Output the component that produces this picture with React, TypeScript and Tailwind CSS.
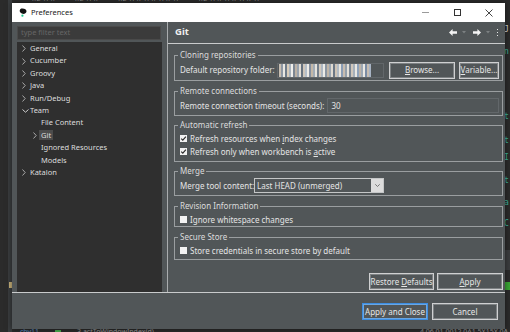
import React from "react";

const stripes = [
  "#c9bfb2", "#8e98a4", "#e9e7e1", "#6f7c8a", "#d8cbb8", "#a9b3bd", "#f0efeb", "#7d8793",
  "#bcb2a5", "#98a3af", "#e2ddd4", "#66727f", "#cfc6ba", "#b4bec8", "#eeebe5", "#8590a0",
  "#c4b8a7", "#a2acb6", "#e6e3dc", "#737f8c", "#d3c9bc", "#aeb8c2", "#ecebe6", "#8a95a1",
  "#c0b5a6", "#9ba6b1", "#dfdad1", "#6b7785", "#cdc3b5", "#b0bac4", "#e9e6df", "#8a9db5",
  "#c8bdb0", "#94a0ab", "#e4e0d8", "#7b8795", "#d0c7bb", "#a6b0ba", "#eae8e2", "#8ea2ba",
  "#beb4a8", "#9ea9b4", "#ebe8e2", "#7a8ca4", "#c6bcb0", "#a8b4c4",
];

const tree = [
  { label: "General", level: 0, chev: "right" },
  { label: "Cucumber", level: 0, chev: "right" },
  { label: "Groovy", level: 0, chev: "right" },
  { label: "Java", level: 0, chev: "right" },
  { label: "Run/Debug", level: 0, chev: "right" },
  { label: "Team", level: 0, chev: "down" },
  { label: "File Content", level: 1, chev: "" },
  { label: "Git", level: 1, chev: "right", selected: true },
  { label: "Ignored Resources", level: 1, chev: "" },
  { label: "Models", level: 1, chev: "" },
  { label: "Katalon", level: 0, chev: "right" },
];

function Chevron({ dir }: { dir: string }) {
  if (dir === "right") {
    return (
      <svg width="4" height="7" viewBox="0 0 4 7">
        <path d="M0.5 0.5 L3.2 3.5 L0.5 6.5" stroke="#a8a8a8" strokeWidth="1" fill="none" />
      </svg>
    );
  }
  if (dir === "down") {
    return (
      <svg width="7" height="4" viewBox="0 0 7 4">
        <path d="M0.5 0.5 L3.5 3.2 L6.5 0.5" stroke="#cfcfcf" strokeWidth="1" fill="none" />
      </svg>
    );
  }
  return null;
}

function Check({ checked }: { checked?: boolean }) {
  return (
    <span className="relative w-[7px] h-[7px] bg-[#f2f2f2] flex-none">
      {checked && (
        <svg className="absolute inset-0" width="7" height="7" viewBox="0 0 7 7">
          <path d="M1.2 3.6 L2.8 5.2 L5.9 1.6" stroke="#2a2a2a" strokeWidth="1.1" fill="none" />
        </svg>
      )}
    </span>
  );
}

function Btn({ className, children }: { className: string; children: React.ReactNode }) {
  return (
    <div
      className={`h-[17px] flex-none flex items-center justify-center border text-[8px] text-[#e6e6e6] whitespace-nowrap ${className}`}
    >
      {children}
    </div>
  );
}

function Group({ title, className, children }: { title: string; className: string; children: React.ReactNode }) {
  return (
    <fieldset className={`border border-[#9a9ea0] pl-[5px] pr-[3px] ${className}`}>
      <legend className="-ml-[2px] px-[2px] text-[8px] leading-[10px] text-[#dcdcdc] whitespace-nowrap">{title}</legend>
      {children}
    </fieldset>
  );
}

export default function App() {
  return (
    <div className="relative w-[510px] h-[332px] overflow-hidden bg-[#2b2b2b] font-['Noto_Sans',sans-serif]">
      {/* IDE behind the dialog */}
      <div className="absolute left-[30px] -top-[5px] flex gap-[18px] text-[7px] leading-[8px] text-[#8a8a8a] whitespace-nowrap">
        <span>4f2 1f4f</span>
        <span>4f2 1f4f</span>
        <span>4f2 1f4f 1f4f 1f4f 1f</span>
        <span>4f2 1f4f 1f4f 1f4f 1f</span>
      </div>
      <div className="absolute left-[8px] top-0 w-[4px] h-[332px] bg-[#3a3d3f]" />
      <div className="absolute left-[9px] top-[282px] w-[3px] h-[6px] bg-[#c9b27a]" />
      <div className="absolute right-0 top-0 w-[6px] h-[332px] flex flex-col text-[8px] leading-[8px] text-[#3fb8a0] font-['DejaVu_Sans_Mono',monospace]">
        <span className="mt-[26px] text-[#d8d8d8]">J</span>
        <span className="mt-[14px]">n</span>
        <span className="mt-[57px]">t</span>
        <span className="mt-[16px]">t</span>
        <span className="mt-[9px]">I</span>
        <span className="mt-[15px]">t</span>
        <span className="mt-[14px]">a</span>
        <span className="mt-[13px]">C</span>
        <span className="mt-[22px] h-[20px] -mx-[1px] bg-[#3b3d3f]" />
        <span className="mt-[12px] h-[8px] bg-[#3aa635]" />
      </div>
      <div className="absolute left-[20px] top-[328px] flex gap-[16px] text-[7px] leading-[8px] text-[#9a9a9a] whitespace-nowrap">
        <span className="text-[#5b8fc9]">cbv11</span>
        <span className="w-[6px] h-[3px] mt-[2px] bg-[#4caf50]" />
        <span>3   actToWindowIndex(d)</span>
        <span className="ml-[250px]">4  06  01  0012  0A1 5X15X  0A</span>
      </div>

      {/* Dialog window */}
      <div className="absolute left-[12px] top-[3px] w-[493px] h-[326px] flex flex-col bg-[#515658] shadow-[0_0_6px_rgba(0,0,0,0.5)]">
        {/* Title bar */}
        <div className="h-[19px] flex items-center bg-white">
          <svg className="ml-[7px]" width="8" height="9" viewBox="0 0 8 9">
            <path d="M2.2 0.6 C4.6 0 7.8 1.2 7.5 3.6 C7.2 5.6 5 6.2 3.6 5.8 C1.9 5.4 0.4 4.2 0.7 2.6 C0.9 1.6 1.4 0.9 2.2 0.6 Z" fill="#111" />
            <circle cx="3.4" cy="7.7" r="1.1" fill="#1ec98f" />
          </svg>
          <span className="ml-[4px] text-[7.5px] text-[#1a1a1a]">Preferences</span>
          <div className="ml-auto flex h-full">
            <div className="w-[32px] flex items-center justify-center">
              <span className="w-[7px] h-px bg-[#9a9a9a]" />
            </div>
            <div className="w-[32px] flex items-center justify-center">
              <span className="w-[7px] h-[7px] border border-[#333]" />
            </div>
            <div className="w-[32px] flex items-center justify-center">
              <svg width="8" height="8" viewBox="0 0 8 8">
                <path d="M0.5 0.5 L7.5 7.5 M7.5 0.5 L0.5 7.5" stroke="#333" strokeWidth="0.9" />
              </svg>
            </div>
          </div>
        </div>

        <div className="flex-1 flex flex-col">
          <div className="h-[270px] flex">
            {/* Left: filter + tree */}
            <div className="w-[155px] flex flex-col pl-[5px] pt-[4px]">
              <div className="h-[14px] w-[144px] bg-[#3b3b3b] border border-[#4a4a4a] flex items-center pl-[3px] text-[7.5px] text-[#666]">
                type filter text
              </div>
              <div className="mt-[2px] flex-1 w-[145px] bg-[#2f2f2f] pt-[0.5px]">
                {tree.map((t) => (
                  <div
                    key={t.label}
                    className={`h-[12.4px] flex items-center text-[7.5px] text-[#dedede] whitespace-nowrap ${t.level === 1 ? "pl-[16px]" : "pl-[5px]"}`}
                  >
                    <span className="w-[8px] flex items-center">
                      <Chevron dir={t.chev} />
                    </span>
                    {t.selected ? (
                      <span className="-ml-[2px] px-[2px] leading-[10px] bg-[#4c4c4c]">{t.label}</span>
                    ) : (
                      <span>{t.label}</span>
                    )}
                  </div>
                ))}
              </div>
            </div>
            <div className="w-px bg-[#a9acae]" />

            {/* Right: page */}
            <div className="flex-1 flex flex-col">
              <div className="h-[21px] flex items-center pl-[7px] pr-[7px]">
                <span className="text-[9.5px] font-bold text-[#efefef]">Git</span>
                <div className="ml-auto flex items-center">
                  <svg width="8" height="7" viewBox="0 0 8 7">
                    <path d="M0 3.5 L3.6 0 V2.2 H8 V4.8 H3.6 V7 Z" fill="#f4f4f4" />
                  </svg>
                  <svg className="ml-[5px]" width="4" height="3" viewBox="0 0 4 3">
                    <path d="M0 0 H4 L2 2.5 Z" fill="#7c8082" />
                  </svg>
                  <svg className="ml-[7px]" width="8" height="7" viewBox="0 0 8 7">
                    <path d="M8 3.5 L4.4 0 V2.2 H0 V4.8 H4.4 V7 Z" fill="#f4f4f4" />
                  </svg>
                  <svg className="ml-[5px]" width="4" height="3" viewBox="0 0 4 3">
                    <path d="M0 0 H4 L2 2.5 Z" fill="#7c8082" />
                  </svg>
                  <div className="ml-[7px] flex flex-col gap-[1.5px]">
                    <span className="w-[1.5px] h-[1.5px] bg-[#e8e8e8]" />
                    <span className="w-[1.5px] h-[1.5px] bg-[#e8e8e8]" />
                    <span className="w-[1.5px] h-[1.5px] bg-[#e8e8e8]" />
                  </div>
                </div>
              </div>
              <div className="h-px bg-[#c9cbcc]" />

              <div className="flex-1 flex flex-col pl-[6px] pr-[2px] pt-[6px] text-[8px] text-[#e4e4e4] whitespace-nowrap">
                <Group title="Cloning repositories" className="h-[31px]">
                  <div className="mt-[2px] h-[16px] flex items-center">
                    <span className="flex-none">Default repository folder:</span>
                    <div className="ml-auto flex-none w-[107px] h-[15px] border border-[#62676a] flex items-center pl-[1px]">
                      <div className="flex h-[13px]">
                        {stripes.map((c, i) => (
                          <span key={i} className="w-[2px] h-full" style={{ backgroundColor: c }} />
                        ))}
                      </div>
                    </div>
                    <Btn className="ml-[5px] w-[66px] h-[16px] border-[#cfd0d1] shadow-[inset_0_0_0_1px_#7e8284]">
                      <span>
                        <span className="underline">B</span>rowse...
                      </span>
                    </Btn>
                    <Btn className="ml-[4px] w-[40px] h-[16px] border-[#cfd0d1] shadow-[inset_0_0_0_1px_#7e8284]">
                      <span>
                        <span className="underline">V</span>ariable...
                      </span>
                    </Btn>
                  </div>
                </Group>

                <Group title="Remote connections" className="mt-[5px] h-[30px]">
                  <div className="mt-[2px] h-[15px] flex items-center">
                    <span className="flex-none">Remote connection timeout (seconds):</span>
                    <div className="ml-[3px] flex-1 h-[15px] border border-[#62676a] flex items-center pl-[3px]">
                      30
                    </div>
                  </div>
                </Group>

                <Group title="Automatic refresh" className="mt-[4px] h-[42px]">
                  <div className="mt-[2px] h-[13px] flex items-center gap-[3px]">
                    <Check checked />
                    <span>
                      Refresh resources when <span className="underline">i</span>ndex changes
                    </span>
                  </div>
                  <div className="h-[13px] flex items-center gap-[3px]">
                    <Check checked />
                    <span>
                      Refresh only when workbench is <span className="underline">a</span>ctive
                    </span>
                  </div>
                </Group>

                <Group title="Merge" className="mt-[4px] h-[30px]">
                  <div className="mt-[2px] h-[15px] flex items-center">
                    <span className="flex-none w-[74px]">Merge tool content:</span>
                    <div className="flex-none w-[130px] h-[15px] border border-[#c4c6c7] flex">
                      <span className="flex-1 flex items-center pl-[2px]">Last HEAD (unmerged)</span>
                      <span className="w-[12px] bg-[#dcdcdc] flex items-center justify-center">
                        <svg width="5" height="3" viewBox="0 0 5 3">
                          <path d="M0.3 0.3 L2.5 2.5 L4.7 0.3" stroke="#6a6a6a" strokeWidth="0.9" fill="none" />
                        </svg>
                      </span>
                    </div>
                  </div>
                </Group>

                <Group title="Revision Information" className="mt-[5px] h-[26px]">
                  <div className="mt-[2px] h-[13px] flex items-center gap-[3px]">
                    <Check />
                    <span>Ignore whitespace changes</span>
                  </div>
                </Group>

                <Group title="Secure Store" className="mt-[5px] h-[28px]">
                  <div className="mt-[2px] h-[13px] flex items-center gap-[3px]">
                    <Check />
                    <span>Store credentials in secure store by default</span>
                  </div>
                </Group>

                <div className="mt-[13px] flex justify-end gap-[3px]">
                  <Btn className="w-[65px] border-[#cfd0d1] shadow-[inset_0_0_0_1px_#7e8284]">
                    <span>
                      Restore <span className="underline">D</span>efaults
                    </span>
                  </Btn>
                  <Btn className="w-[66px] border-[#cfd0d1] shadow-[inset_0_0_0_1px_#7e8284]">
                    <span>
                      <span className="underline">A</span>pply
                    </span>
                  </Btn>
                </div>
              </div>
            </div>
          </div>

          <div className="h-px bg-[#c9cbcc]" />

          {/* Bottom button bar */}
          <div className="flex-1 flex justify-end gap-[4px] pt-[10px] pr-[7px]">
            <Btn className="w-[66px] border-[#3d8ee2] shadow-[inset_0_0_0_1px_#6aa6e2]">Apply and Close</Btn>
            <Btn className="w-[66px] border-[#cfd0d1] shadow-[inset_0_0_0_1px_#7e8284]">Cancel</Btn>
          </div>
        </div>
      </div>
    </div>
  );
}
